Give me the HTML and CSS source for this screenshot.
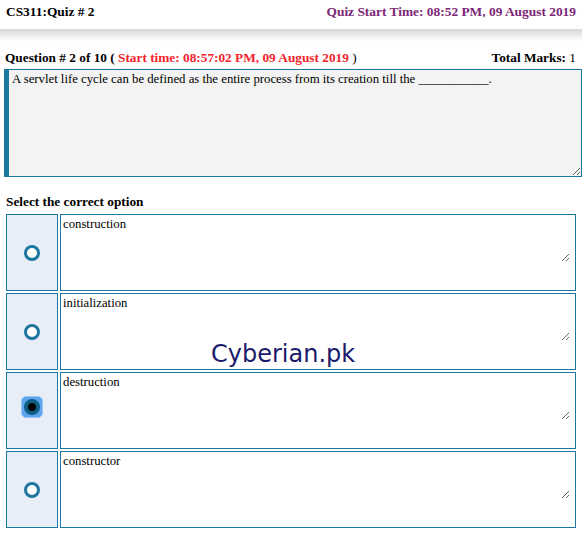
FILE: index.html
```html
<!DOCTYPE html>
<html>
<head>
<meta charset="utf-8">
<link rel="stylesheet" href="styles.css">
</head>
<body>
<div class="page">
  <header class="topbar">
    <span class="course">CS311:Quiz # 2</span>
    <span class="quiz-start">Quiz Start Time: 08:52 PM, 09 August 2019</span>
  </header>
  <div class="shade"></div>
  <div class="qline">
    <span class="qnum">Question # 2 of 10 ( <span class="qtime">Start time: 08:57:02 PM, 09 August 2019</span> <span class="paren">)</span></span>
    <span class="marks">Total Marks: <span class="mval">1</span></span>
  </div>
  <textarea class="question" readonly>A servlet life cycle can be defined as the entire process from its creation till the ___________.</textarea>
  <div class="select-label">Select the correct option</div>
  <div class="options">
    <div class="pick"><span class="radio"></span></div>
    <div class="answer"><textarea readonly>construction</textarea></div>
    <div class="pick"><span class="radio"></span></div>
    <div class="answer"><textarea readonly>initialization</textarea></div>
    <div class="pick"><span class="focus"><span class="radio checked"></span></span></div>
    <div class="answer"><textarea readonly>destruction</textarea></div>
    <div class="pick"><span class="radio"></span></div>
    <div class="answer"><textarea readonly>constructor</textarea></div>
  </div>
  <div class="watermark">Cyberian.pk</div>
</div>
</body>
</html>
```
FILE: styles.css
```css
* { box-sizing: border-box; }
html, body { margin: 0; padding: 0; background: #fff; }
body { font-family: "Liberation Serif", "Times New Roman", serif; font-size: 13px; color: #000; }
.page { position: relative; width: 582px; height: 533px; overflow: hidden; }
.topbar { display: flex; justify-content: space-between; align-items: baseline; height: 29px; padding: 4px 6px 0 6px; font-weight: bold; font-size: 13.4px; }
.quiz-start { color: #7d2677; }
.shade { height: 12px; background: linear-gradient(#d6d6d6, #fff); }
.qline { display: flex; justify-content: space-between; align-items: baseline; padding: 9px 6px 0 5px; height: 28px; font-weight: bold; font-size: 13.3px; }
.qtime { color: #f2232b; }
.paren, .mval { font-weight: normal; }
textarea { font-family: "Liberation Serif", "Times New Roman", serif; font-size: 12.75px; color: #000; }
.question { display: block; margin: 0 0 0 4px; width: 578px; height: 108px; border: 1.5px solid #1b79a1; border-left: 5px solid #1b79a1; background: #f3f3f3; padding: 2px 3px; resize: both; outline: none; }
.select-label { font-weight: bold; font-size: 13.3px; padding: 17px 0 0 6px; height: 37px; }
.options { display: grid; grid-template-columns: 52px 516px; grid-auto-rows: 77px; gap: 2px 2px; padding-left: 6px; }
.pick { border: 1.5px solid #1b79a1; background: #e7eef8; display: flex; align-items: center; justify-content: center; }
.answer { border: 1.5px solid #1b79a1; background: #fff; padding: 2px 0 0 0; }
.answer textarea { display: block; width: 509px; height: 45px; border: none; margin: 0; padding: 0 2px; background: transparent; resize: both; outline: none; }
.radio { display: block; width: 16px; height: 16px; border-radius: 50%; border: 3.5px solid #1f77a0; background: #fff; }
.radio.checked { border: 4px solid #0d5f85; background: #000; }
.focus { display: flex; align-items: center; justify-content: center; width: 22px; height: 22px; margin-top: -7px; border-radius: 5px; background: #5fa3ea; border: 1.5px solid #94c8f6; }
.watermark { position: absolute; left: 211px; top: 340px; font-family: "DejaVu Sans", Verdana, sans-serif; font-size: 24px; color: #1b1b6b; }
```
